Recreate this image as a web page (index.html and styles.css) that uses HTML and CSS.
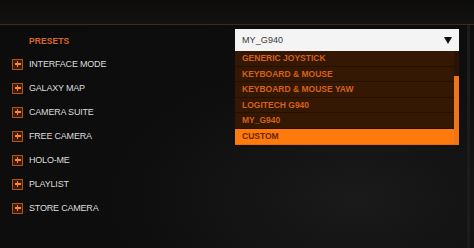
FILE: index.html
```html
<!DOCTYPE html>
<html>
<head>
<meta charset="utf-8">
<link rel="stylesheet" href="styles.css">
</head>
<body>
<div class="screen">
  <div class="topbar"></div>
  <div class="panel">
    <div class="preset-row">
      <div class="preset-label">PRESETS</div>
      <div class="select-wrap">
        <div class="select">
          <span class="select-value">MY_G940</span>
          <svg class="arrow" width="8" height="7" viewBox="0 0 8 7"><polygon points="0,0 8,0 4,7" fill="#111"/></svg>
        </div>
        <div class="dropdown">
          <ul class="options">
            <li class="option">GENERIC JOYSTICK</li>
            <li class="option">KEYBOARD &amp; MOUSE</li>
            <li class="option">KEYBOARD &amp; MOUSE YAW</li>
            <li class="option">LOGITECH G940</li>
            <li class="option">MY_G940</li>
            <li class="option selected">CUSTOM</li>
          </ul>
          <div class="scrolltrack"><div class="thumb"></div></div>
        </div>
      </div>
    </div>
    <ul class="groups">
      <li class="group"><span class="plus"></span><span class="group-name">INTERFACE MODE</span></li>
      <li class="group"><span class="plus"></span><span class="group-name">GALAXY MAP</span></li>
      <li class="group"><span class="plus"></span><span class="group-name">CAMERA SUITE</span></li>
      <li class="group"><span class="plus"></span><span class="group-name">FREE CAMERA</span></li>
      <li class="group"><span class="plus"></span><span class="group-name">HOLO-ME</span></li>
      <li class="group"><span class="plus"></span><span class="group-name">PLAYLIST</span></li>
      <li class="group"><span class="plus"></span><span class="group-name">STORE CAMERA</span></li>
    </ul>
  </div>
</div>
</body>
</html>
```
FILE: styles.css
```css
* { box-sizing: border-box; }
html, body { margin: 0; padding: 0; }
body {
  width: 474px;
  height: 248px;
  overflow: hidden;
  background: #0d0d0d;
  font-family: "Liberation Sans", Arial, sans-serif;
}
.screen {
  width: 474px;
  height: 248px;
  background: radial-gradient(ellipse at 75% 80%, #1a1a1a 0%, #0e0e0e 45%, #0b0b0b 100%);
}
.topbar {
  height: 25px;
  background: linear-gradient(#0c0c0c, #141210);
  border-bottom: 1px solid #3a2c1e;
}
.panel {
  width: 470px;
  height: 223px;
  border-right: 3px solid #1c1c1c;
  padding-top: 4px;
}
.preset-row {
  display: flex;
  align-items: center;
  height: 22px;
  position: relative;
}
.preset-label {
  width: 235px;
  padding-left: 29px;
  padding-top: 1px;
  color: #d8682a;
  font-size: 8.5px;
  font-weight: bold;
  letter-spacing: 0.1px;
}
.select-wrap {
  position: relative;
  width: 224px;
  height: 22px;
}
.select {
  height: 22px;
  background: #f4f4f4;
  display: flex;
  align-items: center;
  justify-content: space-between;
  padding: 0 7px 0 7px;
}
.select-value {
  color: #3a3a3a;
  font-size: 9px;
  letter-spacing: 0.1px;
}
.arrow { display: block; margin-top: 1px; }
.dropdown {
  position: absolute;
  top: 22px;
  left: 0;
  width: 224px;
  display: flex;
  background: #351803;
  border-bottom: 1px solid #e86d10;
  z-index: 2;
}
.options {
  list-style: none;
  margin: 0;
  padding: 0;
  width: 219px;
}
.option {
  height: 15.5px;
  display: flex;
  align-items: center;
  padding-left: 7px;
  color: #d4601c;
  font-size: 8.5px;
  font-weight: bold;
  border-bottom: 1px solid #261000;
}
.option.selected {
  background: #ff7a0c;
  color: #6a2600;
  border-bottom: none;
}
.scrolltrack {
  width: 5px;
  display: flex;
  flex-direction: column;
  justify-content: flex-end;
  background: #2a1304;
}
.thumb {
  height: 68px;
  background: #f07418;
}
.groups {
  list-style: none;
  margin: 0;
  padding: 1px 0 0 0;
}
.group {
  height: 24px;
  display: flex;
  align-items: center;
  padding-left: 12px;
}
.plus {
  width: 11px;
  height: 11px;
  border: 1px solid #b5521a;
  background: #3b1a08;
  position: relative;
  margin-right: 6px;
}
.plus::before, .plus::after {
  content: "";
  position: absolute;
  background: #ff8a2c;
}
.plus::before { left: 1.5px; right: 1.5px; top: 3.75px; height: 1.5px; }
.plus::after { top: 1.5px; bottom: 1.5px; left: 3.75px; width: 1.5px; }
.group-name {
  color: #dcdcdc;
  font-size: 9px;
  letter-spacing: -0.2px;
}
```
